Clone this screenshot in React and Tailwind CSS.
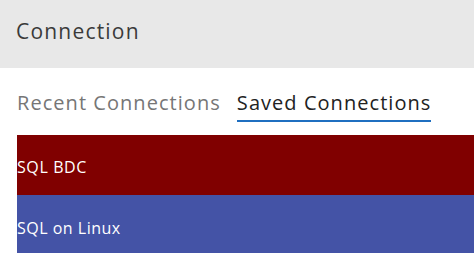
export default function App() {
  return (
    <div className="w-[474px] h-[260px] bg-white overflow-hidden" style={{ fontFamily: '"Open Sans", "Noto Sans", sans-serif' }}>
      <div className="h-[68px] bg-[#e8e8e8] flex items-center pl-[16px] pb-[6px]">
        <span className="text-[21px] text-[#3a3a3a] leading-none tracking-[1.2px]">Connection</span>
      </div>
      <div className="flex pl-[17px] gap-[16px] pt-[22px]">
        <div className="text-[20px] text-[#767676] leading-[26px] pb-[6px] tracking-[1.05px]">Recent Connections</div>
        <div className="text-[20px] text-[#222222] leading-[26px] pb-[4px] border-b-2 border-[#1f6fc0] tracking-[1.05px]">Saved Connections</div>
      </div>
      <div className="ml-[17px] mt-[13px]">
        <div className="h-[60px] bg-[#800000] flex items-center pt-[3px] text-white text-[16px] tracking-[0.6px]">SQL BDC</div>
        <div className="h-[58px] bg-[#4453a6] flex items-center pt-[7px] text-white text-[16px] tracking-[0.5px]">SQL on Linux</div>
      </div>
    </div>
  );
}
